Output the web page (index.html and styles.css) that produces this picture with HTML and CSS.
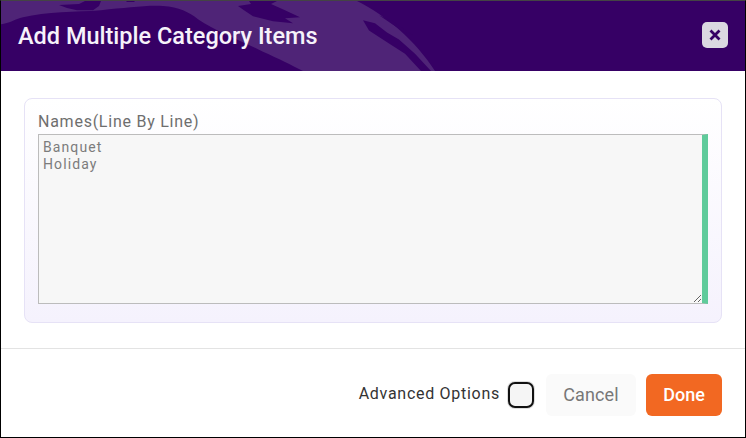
FILE: index.html
```html
<!DOCTYPE html>
<html lang="en">
<head>
    <meta charset="UTF-8">
    <title>Add Multiple Category Items</title>
    <link rel="stylesheet" href="styles.css">
</head>
<body>
    <div class="modal">
        <div class="modal-header">
            <svg class="header-map" viewBox="0 0 744 69" preserveAspectRatio="none" aria-hidden="true">
                <path class="land" d="M0 23 C8 22 14 18 22 16 C45 10 75 11 100 9 C125 7 145 4 162 5 C178 6 188 11 197 18 C215 30 240 39 262 50 C278 57 290 63 302 69 L434 69 C425 55 412 40 398 28 C385 17 372 8 356 0 L0 0 Z"/>
                <path class="sea" d="M58 4 L78 3 L84 0 L100 0 L98 5 L92 9 L76 9 L66 7 Z M126 1 L134 1 L133 0 L125 0 Z M237 5 L250 3 L248 0 L276 0 L270 3 L284 9 L299 16 L284 17 L292 22 L272 20 L252 15 L243 9 Z M362 19 L374 22 L386 31 L398 38 L414 52 L430 69 L420 69 L404 52 L388 42 L368 29 Z M378 14 L392 20 L412 34 L402 30 Z"/>
            </svg>
            <h2 class="modal-title">Add Multiple Category Items</h2>
            <button type="button" class="btn-close" aria-label="Close">
                <svg width="12" height="12" viewBox="0 0 12 12"><path d="M1.5 1.5 L10.5 10.5 M10.5 1.5 L1.5 10.5"/></svg>
            </button>
        </div>
        <div class="modal-body">
            <div class="card">
                <label for="names" class="label">Names(Line By Line)</label>
                <textarea id="names" class="input-names" placeholder="Banquet&#10;Holiday"></textarea>
            </div>
        </div>
        <div class="modal-footer">
            <label for="advanced" class="advanced-label">Advanced Options</label>
            <span class="checkbox-wrap"><input type="checkbox" id="advanced" class="checkbox"></span>
            <button type="button" class="btn btn-cancel">Cancel</button>
            <button type="button" class="btn btn-done">Done</button>
        </div>
    </div>
</body>
</html>
```

FILE: styles.css
```css
html, body {
    height: 100%;
}

body {
    margin: 0;
    font-family: Roboto, Arial, sans-serif;
    background-color: #fff;
}

.modal {
    height: 100%;
    box-sizing: border-box;
    display: flex;
    flex-direction: column;
    border: 1px solid #000;
    border-top-color: #444;
    background-color: #fff;
}

.modal-header {
    position: relative;
    flex: none;
    height: 70px;
    display: flex;
    align-items: center;
    justify-content: space-between;
    padding: 0 17px 0 17px;
    box-sizing: border-box;
    background-color: #360065;
    overflow: hidden;
}

.header-map {
    position: absolute;
    left: 0;
    top: 0;
    width: 100%;
    height: 100%;
}

.header-map .land {
    fill: #4f2477;
}

.header-map .sea {
    fill: #360065;
}

.modal-title {
    position: relative;
    margin: 0;
    font-size: 23.5px;
    font-weight: 500;
    color: #f6f2fa;
}

.btn-close {
    position: relative;
    width: 26px;
    height: 26px;
    padding: 0;
    margin-top: -3px;
    display: flex;
    align-items: center;
    justify-content: center;
    border: none;
    border-radius: 5px;
    background-color: #dbd8e1;
}

.btn-close path {
    fill: none;
    stroke: #360065;
    stroke-width: 2.8;
}

.modal-body {
    flex: none;
    padding: 27px 23px 25px 23px;
    border-bottom: 1px solid #e3e3e3;
}

.card {
    display: flex;
    flex-direction: column;
    height: 225px;
    box-sizing: border-box;
    padding: 13px 13px 18px 13px;
    border: 1px solid #e6e2f6;
    border-radius: 8px;
    background: linear-gradient(#fff, #f5f2fd);
}

.label {
    font-size: 16px;
    line-height: 20px;
    letter-spacing: 0.75px;
    color: #6e6e6e;
    margin-bottom: 2px;
}

.input-names {
    flex: 1;
    padding: 4px 4px 2px;
    font-family: Roboto, Arial, sans-serif;
    font-size: 14px;
    line-height: 17px;
    letter-spacing: 1.1px;
    border: 1px solid #bcbcbc;
    border-right: 6px solid #5fcb9b;
    background-color: #f7f7f7;
    outline: none;
}

.input-names::placeholder {
    color: #7c7c7c;
    opacity: 1;
}

.modal-footer {
    flex: 1;
    display: flex;
    align-items: center;
    justify-content: flex-end;
    padding: 4px 23px 0 0;
}

.advanced-label {
    font-size: 16px;
    letter-spacing: 0.72px;
    color: #333;
    margin-top: -4px;
}

.checkbox-wrap {
    display: flex;
    margin: 0 11px 0 7px;
}

.checkbox {
    appearance: none;
    width: 26px;
    height: 26px;
    margin: 1px;
    box-sizing: border-box;
    border: 2.5px solid #111;
    border-radius: 7px;
    box-shadow: 0 0 0 1px #ddd;
    background-color: #f5f5f5;
}

.btn {
    height: 42px;
    padding: 0 0 2px;
    border: none;
    border-radius: 6px;
    font-family: Roboto, Arial, sans-serif;
    font-size: 18px;
    cursor: pointer;
}

.btn-cancel {
    width: 90px;
    margin-right: 10px;
    letter-spacing: 0.1px;
    color: #777;
    background-color: #fafafa;
}

.btn-done {
    width: 76px;
    font-weight: 500;
    color: #fff;
    background-color: #f26822;
}
```
